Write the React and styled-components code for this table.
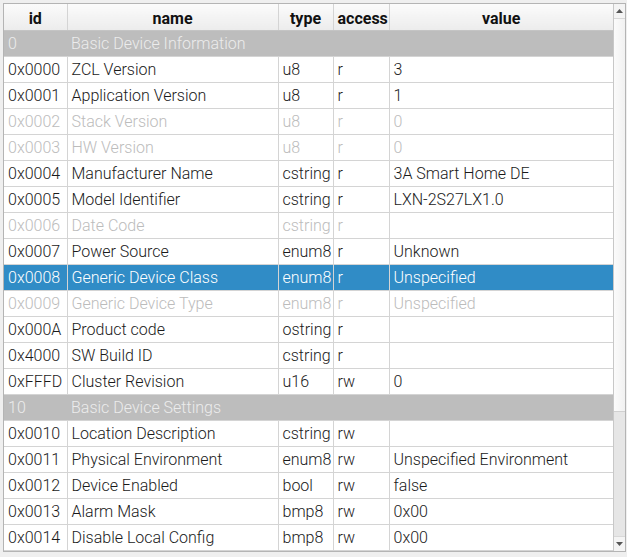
import React from 'react'
import styled, { createGlobalStyle } from 'styled-components'

const rows = [
  { group: true, id: '0', name: 'Basic Device Information' },
  { id: '0x0000', name: 'ZCL Version', type: 'u8', access: 'r', value: '3' },
  { id: '0x0001', name: 'Application Version', type: 'u8', access: 'r', value: '1' },
  { id: '0x0002', name: 'Stack Version', type: 'u8', access: 'r', value: '0', off: true },
  { id: '0x0003', name: 'HW Version', type: 'u8', access: 'r', value: '0', off: true },
  { id: '0x0004', name: 'Manufacturer Name', type: 'cstring', access: 'r', value: '3A Smart Home DE' },
  { id: '0x0005', name: 'Model Identifier', type: 'cstring', access: 'r', value: 'LXN-2S27LX1.0' },
  { id: '0x0006', name: 'Date Code', type: 'cstring', access: 'r', value: '', off: true },
  { id: '0x0007', name: 'Power Source', type: 'enum8', access: 'r', value: 'Unknown' },
  { id: '0x0008', name: 'Generic Device Class', type: 'enum8', access: 'r', value: 'Unspecified', selected: true },
  { id: '0x0009', name: 'Generic Device Type', type: 'enum8', access: 'r', value: 'Unspecified', off: true },
  { id: '0x000A', name: 'Product code', type: 'ostring', access: 'r', value: '' },
  { id: '0x4000', name: 'SW Build ID', type: 'cstring', access: 'r', value: '' },
  { id: '0xFFFD', name: 'Cluster Revision', type: 'u16', access: 'rw', value: '0' },
  { group: true, id: '10', name: 'Basic Device Settings' },
  { id: '0x0010', name: 'Location Description', type: 'cstring', access: 'rw', value: '' },
  { id: '0x0011', name: 'Physical Environment', type: 'enum8', access: 'rw', value: 'Unspecified Environment' },
  { id: '0x0012', name: 'Device Enabled', type: 'bool', access: 'rw', value: 'false' },
  { id: '0x0013', name: 'Alarm Mask', type: 'bmp8', access: 'rw', value: '0x00' },
  { id: '0x0014', name: 'Disable Local Config', type: 'bmp8', access: 'rw', value: '0x00' },
]

const columns = [
  { key: 'id', label: 'id', width: 63 },
  { key: 'name', label: 'name', width: 211 },
  { key: 'type', label: 'type', width: 55 },
  { key: 'access', label: 'access', width: 56 },
  { key: 'value', label: 'value', width: 224 },
]

export default function App() {
  return (
    <>
      <GlobalStyle />
      <Frame>
        <Table>
          <colgroup>
            {columns.map(c => (
              <col key={c.key} style={{ width: c.width }} />
            ))}
          </colgroup>
          <thead>
            <tr>
              {columns.map(c => (
                <HeadCell key={c.key}>{c.label}</HeadCell>
              ))}
            </tr>
          </thead>
          <tbody>
            {rows.map(row =>
              row.group ? (
                <GroupRow key={'g' + row.id}>
                  <td>{row.id}</td>
                  <td colSpan={4}>{row.name}</td>
                </GroupRow>
              ) : (
                <Row key={row.id} $selected={row.selected} $off={row.off}>
                  {columns.map(c => (
                    <Cell key={c.key}>{row[c.key]}</Cell>
                  ))}
                </Row>
              )
            )}
          </tbody>
        </Table>
        <Scrollbar>
          <ArrowButton>
            <svg width="7" height="4" viewBox="0 0 7 4">
              <path d="M0 4 L3.5 0 L7 4 Z" fill="#555" />
            </svg>
          </ArrowButton>
          <Thumb />
          <Trough />
          <ArrowButton $down>
            <svg width="7" height="4" viewBox="0 0 7 4">
              <path d="M0 0 L3.5 4 L7 0 Z" fill="#555" />
            </svg>
          </ArrowButton>
        </Scrollbar>
      </Frame>
    </>
  )
}

const GlobalStyle = createGlobalStyle`
  body {
    margin: 0;
    background: #efefef;
    font-family: Roboto, "Liberation Sans", sans-serif;
  }
`

const Frame = styled.div`
  display: flex;
  margin: 3px 1px 0 3px;
  width: 621px;
  border: 1px solid #b4b4b4;
  background: #fff;
`

const Table = styled.table`
  width: 609px;
  table-layout: fixed;
  border-collapse: collapse;
  font-size: 16px;
  font-weight: 300;
  color: #1a1a1a;
`

const HeadCell = styled.th`
  height: 26px;
  box-sizing: border-box;
  padding: 3px 4px 0;
  font-size: 16px;
  font-weight: 700;
  color: #111;
  text-align: center;
  background: linear-gradient(#fbfbfb, #ececec);
  border-right: 1px solid #d4d4d4;
  border-bottom: 1px solid #c4c4c4;
  &:last-child {
    border-right: none;
  }
`

const GroupRow = styled.tr`
  height: 26px;
  background: #bdbdbd;
  color: #ececec;
  td {
    padding: 0 4px;
    white-space: nowrap;
    border-bottom: 1px solid #d4d4d4;
  }
`

const Row = styled.tr`
  height: 26px;
  background: ${p => (p.$selected ? '#308cc6' : '#fff')};
  color: ${p => (p.$selected ? '#fff' : p.$off ? '#bcbcbc' : '#1a1a1a')};
`

const Cell = styled.td`
  padding: 0 4px;
  white-space: nowrap;
  overflow: hidden;
  border-right: 1px solid #d4d4d4;
  border-bottom: 1px solid #d4d4d4;
  &:last-child {
    border-right: none;
  }
`

const Scrollbar = styled.div`
  width: 12px;
  display: flex;
  flex-direction: column;
  border-left: 1px solid #c8c8c8;
  background: #e6e6e6;
`

const ArrowButton = styled.div`
  height: 14px;
  display: flex;
  align-items: center;
  justify-content: center;
  background: #f4f4f4;
  border-bottom: ${p => (p.$down ? 'none' : '1px solid #d8d8d8')};
  border-top: ${p => (p.$down ? '1px solid #d8d8d8' : 'none')};
`

const Thumb = styled.div`
  height: 392px;
  background: linear-gradient(90deg, #fbfbfb, #f1f1f1);
  border-bottom: 1px solid #d0d0d0;
`

const Trough = styled.div`
  flex: 1;
`
